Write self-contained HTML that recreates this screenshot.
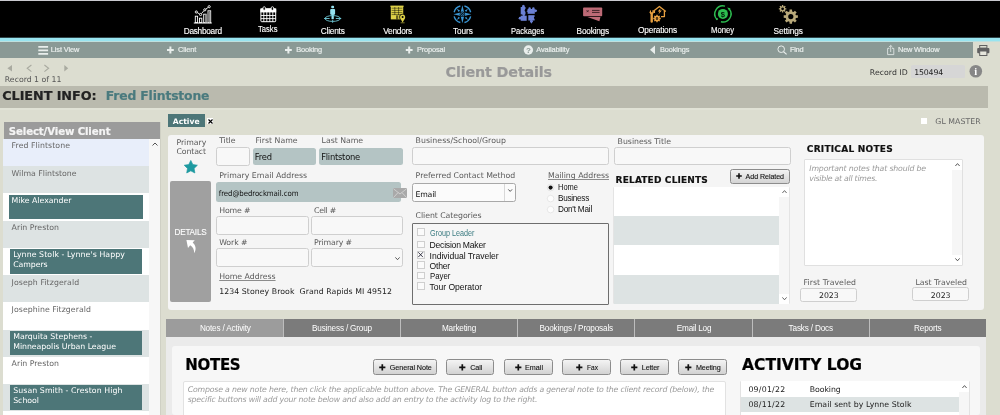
<!DOCTYPE html>
<html lang="en"><head><meta charset="utf-8"><title>Client Details</title>
<style>
html,body{margin:0;padding:0}
body{will-change:transform;width:1000px;height:415px;overflow:hidden;position:relative;background:#dcddd0;font-family:"DejaVu Sans","Liberation Sans",sans-serif}
.b{position:absolute;box-sizing:border-box}
.t{position:absolute;white-space:pre;line-height:1;margin:0;padding:0}
svg{position:absolute;overflow:visible}
</style></head>
<body>
<div class="b" style="left:0px;top:0px;width:1000px;height:38px;background:#000;"></div>
<div class="b" style="left:0px;top:0px;width:1000px;height:1px;background:#c9c9cf;"></div>
<div class="b" style="left:0px;top:37px;width:1000px;height:1px;background:#2e4448;"></div>
<div class="b" style="left:0px;top:38px;width:1000px;height:3px;background:#98e4f0;"></div>
<div class="b" style="left:0px;top:41px;width:1000px;height:1px;background:#bfe0de;"></div>
<span class="t" style="left:183.70px;top:27.00px;font-family:'Liberation Sans',sans-serif;font-size:8.3px;color:#fff;-webkit-text-stroke:0.12px #fff;letter-spacing:-0.277px;">Dashboard</span>
<span class="t" style="left:258.20px;top:25.10px;font-family:'Liberation Sans',sans-serif;font-size:8.3px;color:#fff;-webkit-text-stroke:0.12px #fff;transform:scaleX(0.9190);transform-origin:0 0;">Tasks</span>
<span class="t" style="left:320.80px;top:27.00px;font-family:'Liberation Sans',sans-serif;font-size:8.3px;color:#fff;-webkit-text-stroke:0.12px #fff;letter-spacing:-0.225px;">Clients</span>
<span class="t" style="left:383.20px;top:27.00px;font-family:'Liberation Sans',sans-serif;font-size:8.3px;color:#fff;-webkit-text-stroke:0.12px #fff;letter-spacing:-0.236px;">Vendors</span>
<span class="t" style="left:453.10px;top:27.00px;font-family:'Liberation Sans',sans-serif;font-size:8.3px;color:#fff;-webkit-text-stroke:0.12px #fff;letter-spacing:-0.139px;">Tours</span>
<span class="t" style="left:510.90px;top:27.00px;font-family:'Liberation Sans',sans-serif;font-size:8.3px;color:#fff;-webkit-text-stroke:0.12px #fff;transform:scaleX(0.9139);transform-origin:0 0;">Packages</span>
<span class="t" style="left:576.60px;top:27.00px;font-family:'Liberation Sans',sans-serif;font-size:8.3px;color:#fff;-webkit-text-stroke:0.12px #fff;letter-spacing:-0.243px;">Bookings</span>
<span class="t" style="left:638.00px;top:25.50px;font-family:'Liberation Sans',sans-serif;font-size:8.3px;color:#fff;-webkit-text-stroke:0.12px #fff;letter-spacing:-0.159px;">Operations</span>
<span class="t" style="left:710.80px;top:25.50px;font-family:'Liberation Sans',sans-serif;font-size:8.3px;color:#fff;-webkit-text-stroke:0.12px #fff;transform:scaleX(0.9315);transform-origin:0 0;">Money</span>
<span class="t" style="left:773.50px;top:27.00px;font-family:'Liberation Sans',sans-serif;font-size:8.3px;color:#fff;-webkit-text-stroke:0.12px #fff;letter-spacing:-0.073px;">Settings</span>
<svg style="left:0;top:0" width="1000" height="42" viewBox="0 0 1000 42"><g fill="none" stroke="#fff" stroke-width="0.9"><path d="M193.8 23 H211.8" stroke-width="1"/><rect x="195.3" y="16.2" width="2.3" height="6.4"/><rect x="199.5" y="18.2" width="2.3" height="4.4"/><rect x="203.7" y="14.2" width="2.4" height="8.4"/><rect x="208" y="10.8" width="2.7" height="11.8"/><path d="M197.2 12.6 L199.6 14 M201.5 13.6 L204 10.6 M205.7 9.2 L208.2 7.4"/><circle cx="196.3" cy="12" r="1.1"/><circle cx="200.6" cy="14.5" r="1.1"/><circle cx="204.8" cy="9.8" r="1.1"/><circle cx="209.2" cy="6.7" r="1.1"/></g><path d="M204.9 14.6 h1 v7.8 h-1z M208.6 11.3 h1.6 v11.2 h-1.6z" fill="#8a8a8a"/><g><rect x="260.9" y="8.9" width="14.8" height="12.8" rx="0.8" fill="none" stroke="#fff" stroke-width="1"/><rect x="260.4" y="8.4" width="15.8" height="4" fill="#fff"/><path d="M260.9 15.5 H275.7 M260.9 18.6 H275.7 M263.8 12 V21.7 M266.8 12 V21.7 M269.8 12 V21.7 M272.8 12 V21.7" stroke="#fff" stroke-width="0.9" fill="none"/><rect x="263" y="6.7" width="2.4" height="3.6" rx="1.2" fill="#000" stroke="#fff" stroke-width="0.8"/><rect x="271.2" y="6.7" width="2.4" height="3.6" rx="1.2" fill="#000" stroke="#fff" stroke-width="0.8"/></g><g><rect x="331.2" y="5.8" width="2.9" height="2.4" rx="0.9" fill="#96e2f0"/><rect x="330.2" y="8.9" width="4.9" height="5.8" rx="1" fill="#96e2f0"/><rect x="331.5" y="13" width="2.3" height="6.2" rx="0.4" fill="#96e2f0"/><ellipse cx="332.65" cy="18.5" rx="7.6" ry="2.9" fill="none" stroke="#6fc9d8" stroke-width="0.9"/><path d="M324.2 18.5 H329.6 M335.8 18.5 H341.2 M332.65 20 V22.8" stroke="#6fc9d8" stroke-width="0.9"/><path d="M325.6 17.5 L324 18.5 L325.6 19.5 Z M339.7 17.5 L341.3 18.5 L339.7 19.5 Z" fill="#6fc9d8"/></g><g><rect x="390.8" y="6" width="12.4" height="13.4" fill="#ddd048"/><rect x="390.4" y="5.6" width="13.2" height="1.2" fill="#ddd048"/><path d="M391.6 8.2 H402.4 M391.6 10.4 H402.4 M391.6 12.6 H402.4 M391.6 14.6 H400 M394.8 7 V15 M398.6 7 V15" stroke="#000" stroke-width="0.8" opacity="0.6" fill="none"/><rect x="396" y="15.4" width="2.2" height="4" fill="#000" opacity="0.55"/><circle cx="402.6" cy="17" r="3.3" fill="#000"/><path d="M402.6 22.6 L400.3 18.4 A2.6 2.6 0 1 1 404.9 18.4 Z" fill="#ddd048"/><circle cx="402.6" cy="17" r="1" fill="#000"/><path d="M400.6 22.8 H404.6" stroke="#ddd048" stroke-width="0.6"/></g><g><path d="M470.65 16.36 A8.5 8.5 0 0 1 464.46 22.55 M460.34 22.55 A8.5 8.5 0 0 1 454.15 16.36 M454.15 12.24 A8.5 8.5 0 0 1 460.34 6.05 M464.46 6.05 A8.5 8.5 0 0 1 470.65 12.24 " fill="none" stroke="#3a96d4" stroke-width="1.4"/><path d="M462.4 5.300000000000001 L464.2 12.5 L471.4 14.3 L464.2 16.1 L462.4 23.3 L460.59999999999997 16.1 L453.4 14.3 L460.59999999999997 12.5 Z" fill="#3a96d4"/><path d="M456.79999999999995 8.700000000000001 L460.0 10.5 L458.59999999999997 11.9 Z M468.0 8.700000000000001 L464.79999999999995 10.5 L466.2 11.9 Z M456.79999999999995 19.9 L460.0 18.1 L458.59999999999997 16.7 Z M468.0 19.9 L464.79999999999995 18.1 L466.2 16.7 Z" fill="#3a96d4"/><circle cx="462.4" cy="14.3" r="2.7" fill="#000"/><circle cx="462.4" cy="14.3" r="1.7" fill="none" stroke="#3a96d4" stroke-width="0.8"/><circle cx="462.4" cy="14.3" r="0.5" fill="#3a96d4"/></g><g fill="#6b80d4"><rect x="520.7" y="7" width="4.8" height="7.4"/><circle cx="523.4" cy="6.3" r="1.3"/><path d="M522.2 5.4 L523.4 4.8 L524.6 5.4 Z"/><circle cx="523.6" cy="14.6" r="1.2"/><rect x="527.6" y="9" width="7.2" height="4.8"/><circle cx="529.6" cy="8.4" r="1.2"/><circle cx="533.4" cy="8.4" r="1.2"/><circle cx="535.4" cy="10.8" r="1.4"/><path d="M535.6 9.6 L537.2 10.8 L535.6 12 Z"/><circle cx="527.2" cy="10.8" r="1.1"/><rect x="520.7" y="15.7" width="6" height="5.1"/><circle cx="520.2" cy="18.2" r="1.4"/><path d="M520 17 L518.4 18.2 L520 19.4 Z"/><rect x="528.3" y="15.2" width="6.3" height="5.3"/><circle cx="531.4" cy="21.2" r="1.4"/><path d="M530.2 21.6 L531.4 23.8 L532.6 21.6 Z"/></g><g fill="#000"><circle cx="526" cy="10.4" r="1.3"/><circle cx="523.8" cy="15.7" r="0.1"/><circle cx="524" cy="15.9" r="1.1" opacity="0"/><circle cx="535" cy="17.8" r="1.1"/></g><circle cx="523.7" cy="15" r="1.1" fill="#6b80d4"/><g><rect x="583.1" y="7.5" width="19.1" height="8.7" rx="0.8" fill="#bd6a76"/><path d="M586.6 10.2 l2 2 m0 -2 l-2 2" stroke="#000" stroke-width="0.8" opacity="0.75"/><path d="M592 10.4 H599.6 M592 12.4 H599.6" stroke="#000" stroke-width="0.9" opacity="0.75"/><path d="M587.4 17.1 H600.4 L599.4 21.3 Z" fill="#bd6a76"/></g><g fill="none" stroke="#e8a040" stroke-width="1.3" stroke-linejoin="round"><path d="M653 11.6 L659.4 6.4 L665.8 11.6"/><path d="M654.4 11 V13 M664.4 11 V16.6 H661"/></g><path d="M660.6 8.2 L657.8 11.6 H659.6 L658.4 14.4 L661.8 10.4 H660 Z" fill="#e8a040"/><path d="M651.7 13 V21.6" stroke="#e8a040" stroke-width="2.4" stroke-linecap="round" fill="none"/><circle cx="651.7" cy="12.2" r="2.1" fill="#e8a040"/><rect x="651" y="9.6" width="1.4" height="2.6" fill="#000"/><path d="M660.74 17.85 L660.74 19.15 L659.81 19.22 L659.50 19.98 L660.11 20.69 L659.19 21.61 L658.48 21.00 L657.72 21.31 L657.65 22.24 L656.35 22.24 L656.28 21.31 L655.52 21.00 L654.81 21.61 L653.89 20.69 L654.50 19.98 L654.19 19.22 L653.26 19.15 L653.26 17.85 L654.19 17.78 L654.50 17.02 L653.89 16.31 L654.81 15.39 L655.52 16.00 L656.28 15.69 L656.35 14.76 L657.65 14.76 L657.72 15.69 L658.48 16.00 L659.19 15.39 L660.11 16.31 L659.50 17.02 L659.81 17.78 Z M658.20 18.50 A1.2 1.2 0 1 0 655.80 18.50 A1.2 1.2 0 1 0 658.20 18.50 Z" fill="#e8a040" fill-rule="evenodd"/><circle cx="657" cy="18.5" r="0.5" fill="#e8a040"/><g><circle cx="722.9" cy="13.9" r="5" fill="#2dbd50"/><path d="M716.70 19.11 A8.1 8.1 0 0 1 725.00 6.08" fill="none" stroke="#2dbd50" stroke-width="1.4"/><path d="M729.28 8.91 A8.1 8.1 0 0 1 720.94 21.76" fill="none" stroke="#2dbd50" stroke-width="1.4"/><circle cx="716.9" cy="19.1" r="1.1" fill="#2dbd50"/><path d="M727.2 7.6 L730.4 8.2 L729.4 11 Z" fill="#2dbd50"/><text x="722.9" y="16.6" font-family="Liberation Sans,sans-serif" font-weight="bold" font-size="7.6" text-anchor="middle" fill="#031a09">$</text></g><path d="M786.34 8.15 L786.34 9.45 L785.22 9.47 L784.92 10.17 L785.71 10.99 L784.79 11.91 L783.97 11.12 L783.27 11.42 L783.25 12.54 L781.95 12.54 L781.93 11.42 L781.23 11.12 L780.41 11.91 L779.49 10.99 L780.28 10.17 L779.98 9.47 L778.86 9.45 L778.86 8.15 L779.98 8.13 L780.28 7.43 L779.49 6.61 L780.41 5.69 L781.23 6.48 L781.93 6.18 L781.95 5.06 L783.25 5.06 L783.27 6.18 L783.97 6.48 L784.79 5.69 L785.71 6.61 L784.92 7.43 L785.22 8.13 Z M784.00 8.80 A1.4 1.4 0 1 0 781.20 8.80 A1.4 1.4 0 1 0 784.00 8.80 Z" fill="#b9a97a" fill-rule="evenodd"/><path d="M797.89 15.36 L797.89 17.84 L795.93 17.92 L795.36 19.30 L796.69 20.74 L794.94 22.49 L793.50 21.16 L792.12 21.73 L792.04 23.69 L789.56 23.69 L789.48 21.73 L788.10 21.16 L786.66 22.49 L784.91 20.74 L786.24 19.30 L785.67 17.92 L783.71 17.84 L783.71 15.36 L785.67 15.28 L786.24 13.90 L784.91 12.46 L786.66 10.71 L788.10 12.04 L789.48 11.47 L789.56 9.51 L792.04 9.51 L792.12 11.47 L793.50 12.04 L794.94 10.71 L796.69 12.46 L795.36 13.90 L795.93 15.28 Z M793.40 16.60 A2.6 2.6 0 1 0 788.20 16.60 A2.6 2.6 0 1 0 793.40 16.60 Z" fill="#b9a97a" fill-rule="evenodd"/></svg>
<div class="b" style="left:0px;top:42px;width:972.5px;height:16px;background:#8a9995;"></div>
<span class="t" style="left:50.80px;top:46.30px;font-family:'Liberation Sans',sans-serif;font-size:7.4px;color:#e9eeec;-webkit-text-stroke:0.2px #e9eeec;letter-spacing:-0.106px;">List View</span>
<span class="t" style="left:178.00px;top:46.30px;font-family:'Liberation Sans',sans-serif;font-size:7.4px;color:#e9eeec;-webkit-text-stroke:0.2px #e9eeec;letter-spacing:-0.101px;">Client</span>
<span class="t" style="left:296.30px;top:46.30px;font-family:'Liberation Sans',sans-serif;font-size:7.4px;color:#e9eeec;-webkit-text-stroke:0.2px #e9eeec;letter-spacing:-0.146px;">Booking</span>
<span class="t" style="left:417.00px;top:46.30px;font-family:'Liberation Sans',sans-serif;font-size:7.4px;color:#e9eeec;-webkit-text-stroke:0.2px #e9eeec;letter-spacing:-0.146px;">Proposal</span>
<span class="t" style="left:536.30px;top:46.30px;font-family:'Liberation Sans',sans-serif;font-size:7.4px;color:#e9eeec;-webkit-text-stroke:0.2px #e9eeec;letter-spacing:-0.148px;">Availability</span>
<span class="t" style="left:660.00px;top:46.30px;font-family:'Liberation Sans',sans-serif;font-size:7.4px;color:#e9eeec;-webkit-text-stroke:0.2px #e9eeec;letter-spacing:-0.138px;">Bookings</span>
<span class="t" style="left:790.00px;top:46.30px;font-family:'Liberation Sans',sans-serif;font-size:7.4px;color:#e9eeec;-webkit-text-stroke:0.2px #e9eeec;letter-spacing:-0.273px;">Find</span>
<span class="t" style="left:898.00px;top:46.30px;font-family:'Liberation Sans',sans-serif;font-size:7.4px;color:#e9eeec;-webkit-text-stroke:0.2px #e9eeec;letter-spacing:-0.183px;">New Window</span>
<svg style="left:0;top:42px" width="1000" height="16" viewBox="0 42 1000 16"><path d="M38.3 46.8 H48.1 M38.3 50.3 H48.1 M38.3 53.8 H48.1" stroke="#e9eeec" stroke-width="1.8"/><path d="M170.4 46.6 V53.4 M167 50 H173.8" stroke="#e9eeec" stroke-width="2"/><path d="M288.4 46.6 V53.4 M285 50 H291.8" stroke="#e9eeec" stroke-width="2"/><path d="M409.2 46.6 V53.4 M405.8 50 H412.6" stroke="#e9eeec" stroke-width="2"/><circle cx="528.4" cy="50" r="4.7" fill="#e9eeec"/><text x="528.4" y="52.9" font-family="Liberation Sans,sans-serif" font-weight="bold" font-size="8" text-anchor="middle" fill="#8a9995">?</text><path d="M655 45.5 V54.2 L650 49.8 Z" fill="#e9eeec"/><circle cx="781.2" cy="49.2" r="3.3" fill="none" stroke="#e9eeec" stroke-width="1"/><path d="M783.6 51.8 L786.6 54.4" stroke="#e9eeec" stroke-width="1.2"/><path d="M889.4 48.4 H887.6 V54.6 H893.8 V48.4 H892" fill="none" stroke="#e9eeec" stroke-width="0.8"/><path d="M890.7 52 V45.6 M888.9 47.2 L890.7 45.4 L892.5 47.2" fill="none" stroke="#e9eeec" stroke-width="0.8"/></svg><svg style="left:977px;top:44.5px" width="12.6" height="11" viewBox="0 0 12.6 11"><rect x="2.7" y="0.5" width="7.2" height="2.6" fill="none" stroke="#606060" stroke-width="1"/><rect x="0.2" y="3" width="12.2" height="5.2" rx="0.9" fill="#606060"/><rect x="2.7" y="6" width="7.2" height="4.5" fill="#e6e6dc" stroke="#606060" stroke-width="1"/></svg>
<span class="t" style="left:4.80px;top:76.00px;font-family:'DejaVu Sans','Liberation Sans',sans-serif;font-size:7.8px;color:#555;letter-spacing:-0.013px;">Record 1 of 11</span>
<span class="t" style="left:445.60px;top:65.40px;font-family:'DejaVu Sans','Liberation Sans',sans-serif;font-size:14.3px;color:#999;font-weight:bold;-webkit-text-stroke:0.2px #999;letter-spacing:-0.139px;">Client Details</span>
<span class="t" style="left:869.80px;top:69.20px;font-family:'DejaVu Sans','Liberation Sans',sans-serif;font-size:7.8px;color:#333;letter-spacing:0.018px;">Record ID</span>
<div class="b" style="left:911.2px;top:65.2px;width:54.3px;height:13.3px;background:#d6d6d6;border-radius:1.5px;"></div>
<span class="t" style="left:914.20px;top:69.20px;font-family:'DejaVu Sans','Liberation Sans',sans-serif;font-size:7.8px;color:#222;letter-spacing:-0.161px;">150494</span>
<svg style="left:0;top:60px" width="1000" height="22" viewBox="0 60 1000 22"><path d="M12 65 V71.6 L7.4 68.3 Z" fill="#a9aaa0"/><path d="M31.4 65 L27.2 68.3 L31.4 71.6" fill="none" stroke="#a9aaa0" stroke-width="1.1"/><path d="M44.4 65 L48.6 68.3 L44.4 71.6" fill="none" stroke="#a9aaa0" stroke-width="1.1"/><path d="M64.3 65 V71.6 L68.2 68.3 Z" fill="#a9aaa0"/><circle cx="975.8" cy="71.2" r="6.3" fill="#878787"/><text x="975.8" y="75" font-family="Liberation Serif,serif" font-weight="bold" font-size="10.5" text-anchor="middle" fill="#fff">i</text></svg>
<div class="b" style="left:0px;top:86px;width:987.7px;height:22px;background:#babaae;"></div>
<div class="b" style="left:0px;top:108px;width:987.7px;height:1.6px;background:#e1e2d6;"></div>
<h1 class="t" style="left:2.30px;top:90.30px;font-family:'DejaVu Sans','Liberation Sans',sans-serif;font-size:12.8px;color:#222;font-weight:bold;-webkit-text-stroke:0.2px #222;letter-spacing:-0.080px;">CLIENT INFO:</h1>
<h1 class="t" style="left:105.80px;top:89.80px;font-family:'DejaVu Sans','Liberation Sans',sans-serif;font-size:12.4px;color:#4a7a7e;font-weight:bold;-webkit-text-stroke:0.2px #4a7a7e;letter-spacing:-0.174px;">Fred Flintstone</h1>
<div class="b" style="left:4px;top:122px;width:156px;height:17px;background:#9b9b9b;"></div>
<h2 class="t" style="left:8.80px;top:127.00px;font-family:'DejaVu Sans','Liberation Sans',sans-serif;font-size:10.2px;color:#f4f4f4;font-weight:bold;-webkit-text-stroke:0.2px #f4f4f4;letter-spacing:-0.125px;">Select/View Client</h2>
<div class="b" style="left:3px;top:139px;width:146px;height:276px;background:#fff;"></div>
<div class="b" style="left:149px;top:139px;width:11.2px;height:276px;background:#f7f7f7;"></div>
<div class="b" style="left:160.2px;top:122px;width:1.2px;height:293px;background:#cfd0c4;"></div>
<div class="b" style="left:3px;top:139px;width:146px;height:27.23px;background:#e8eefa;"></div>
<span class="t" style="left:11.60px;top:142.40px;font-family:'DejaVu Sans','Liberation Sans',sans-serif;font-size:7.8px;color:#666;letter-spacing:0.052px;">Fred Flintstone</span>
<div class="b" style="left:3px;top:166.23px;width:146px;height:27.23px;background:#dde3e3;"></div>
<span class="t" style="left:11.60px;top:169.63px;font-family:'DejaVu Sans','Liberation Sans',sans-serif;font-size:7.8px;color:#666;letter-spacing:-0.011px;">Wilma Flintstone</span>
<div class="b" style="left:9.2px;top:194.96px;width:133.6px;height:23.6px;background:#4d7678;"></div>
<span class="t" style="left:11.60px;top:196.76px;font-family:'DejaVu Sans','Liberation Sans',sans-serif;font-size:7.8px;color:#fff;letter-spacing:-0.004px;">Mike Alexander</span>
<div class="b" style="left:3px;top:220.69px;width:146px;height:27.23px;background:#dde3e3;"></div>
<span class="t" style="left:11.60px;top:224.09px;font-family:'DejaVu Sans','Liberation Sans',sans-serif;font-size:7.8px;color:#666;letter-spacing:0.003px;">Arin Preston</span>
<div class="b" style="left:10.2px;top:249.12px;width:131.4px;height:24.7px;background:#4d7678;"></div>
<span class="t" style="left:13.20px;top:251.22px;font-family:'DejaVu Sans','Liberation Sans',sans-serif;font-size:7.8px;color:#fff;letter-spacing:0.089px;">Lynne Stolk - Lynne&#x27;s Happy</span>
<span class="t" style="left:13.20px;top:261.22px;font-family:'DejaVu Sans','Liberation Sans',sans-serif;font-size:7.8px;color:#fff;letter-spacing:-0.063px;">Campers</span>
<div class="b" style="left:3px;top:275.15px;width:146px;height:27.23px;background:#dde3e3;"></div>
<span class="t" style="left:11.60px;top:278.55px;font-family:'DejaVu Sans','Liberation Sans',sans-serif;font-size:7.8px;color:#666;letter-spacing:0.071px;">Joseph Fitzgerald</span>
<span class="t" style="left:11.60px;top:305.78px;font-family:'DejaVu Sans','Liberation Sans',sans-serif;font-size:7.8px;color:#666;letter-spacing:0.056px;">Josephine Fitzgerald</span>
<div class="b" style="left:3px;top:329.61px;width:146px;height:27.23px;background:#dde3e3;"></div>
<div class="b" style="left:10.2px;top:330.81px;width:131.4px;height:24.7px;background:#4d7678;"></div>
<span class="t" style="left:13.20px;top:332.91px;font-family:'DejaVu Sans','Liberation Sans',sans-serif;font-size:7.8px;color:#fff;letter-spacing:0.025px;">Marquita Stephens -</span>
<span class="t" style="left:13.20px;top:342.91px;font-family:'DejaVu Sans','Liberation Sans',sans-serif;font-size:7.8px;color:#fff;letter-spacing:-0.029px;">Minneapolis Urban League</span>
<span class="t" style="left:11.60px;top:360.24px;font-family:'DejaVu Sans','Liberation Sans',sans-serif;font-size:7.8px;color:#666;letter-spacing:0.003px;">Arin Preston</span>
<div class="b" style="left:3px;top:384.07px;width:146px;height:27.23px;background:#dde3e3;"></div>
<div class="b" style="left:10.2px;top:385.27px;width:131.4px;height:24.7px;background:#4d7678;"></div>
<span class="t" style="left:13.20px;top:387.37px;font-family:'DejaVu Sans','Liberation Sans',sans-serif;font-size:7.8px;color:#fff;letter-spacing:0.087px;">Susan Smith - Creston High</span>
<span class="t" style="left:13.20px;top:397.37px;font-family:'DejaVu Sans','Liberation Sans',sans-serif;font-size:7.8px;color:#fff;letter-spacing:-0.015px;">School</span>
<svg style="left:151.5px;top:142px" width="6" height="4" viewBox="0 0 6 4"><path d="M0.5 3.5 L3 1 L5.5 3.5" fill="none" stroke="#555" stroke-width="1"/></svg>
<div class="b" style="left:167.6px;top:114px;width:37.2px;height:13.4px;background:#4d7678;"></div>
<span class="t" style="left:172.80px;top:117.60px;font-family:'DejaVu Sans','Liberation Sans',sans-serif;font-size:7.6px;color:#fff;font-weight:bold;letter-spacing:0.014px;">Active</span>
<div class="b" style="left:207.2px;top:118px;width:5.6px;height:6px;background:#fff;"></div>
<svg style="left:207.7px;top:118.5px" width="5" height="5" viewBox="0 0 5 5"><path d="M0.5 0.5 L4.5 4.5 M4.5 0.5 L0.5 4.5" stroke="#000" stroke-width="1.1" fill="none"/></svg>
<div class="b" style="left:920.6px;top:117.6px;width:6.9px;height:6.7px;background:#fff;"></div>
<span class="t" style="left:935.30px;top:117.90px;font-family:'DejaVu Sans','Liberation Sans',sans-serif;font-size:7.8px;color:#666;letter-spacing:0.046px;">GL MASTER</span>
<div class="b" style="left:167.5px;top:134.5px;width:816.7px;height:175.5px;background:#f5f5f5;border-radius:3px;"></div>
<span class="t" style="left:176.40px;top:138.60px;font-family:'DejaVu Sans','Liberation Sans',sans-serif;font-size:7.8px;color:#5a5a5a;letter-spacing:-0.020px;">Primary</span>
<span class="t" style="left:176.40px;top:148.00px;font-family:'DejaVu Sans','Liberation Sans',sans-serif;font-size:7.8px;color:#5a5a5a;letter-spacing:-0.106px;">Contact</span>
<svg style="left:183.6px;top:160px" width="13.6" height="13.4" viewBox="0 0 24 23"><path d="M12 0.5 L15.6 7.8 L23.6 8.9 L17.8 14.6 L19.2 22.6 L12 18.8 L4.8 22.6 L6.2 14.6 L0.4 8.9 L8.4 7.8 Z" fill="#1d9aa0" stroke="#1d9aa0" stroke-width="1.2" stroke-linejoin="round"/></svg>
<div class="b" style="left:170.4px;top:181px;width:40.6px;height:120.5px;background:#a0a0a0;border-radius:2px;"></div>
<span class="t" style="left:174.50px;top:228.90px;font-family:'Liberation Sans',sans-serif;font-size:8.2px;color:#fff;-webkit-text-stroke:0.1px #fff;letter-spacing:-0.219px;">DETAILS</span>
<svg style="left:185.6px;top:241px" width="10.4" height="12" viewBox="0 0 10.4 12"><path d="M0.4 -1 L8.8 -0.7 L6.7 1.6 C9.9 4.5 10.6 8.5 8.2 12.3 C8.3 8.6 7 6.2 4.2 4.3 L2 6.9 Z" fill="#fff"/></svg>
<span class="t" style="left:219.20px;top:137.00px;font-family:'DejaVu Sans','Liberation Sans',sans-serif;font-size:7.8px;color:#5a5a5a;letter-spacing:-0.104px;">Title</span>
<div class="b" style="left:216.4px;top:147.4px;width:34px;height:18.6px;background:#f8f8f8;border:1px solid #cfcfcf;box-sizing:border-box;border-radius:2.5px;"></div>
<span class="t" style="left:255.60px;top:137.00px;font-family:'DejaVu Sans','Liberation Sans',sans-serif;font-size:7.8px;color:#5a5a5a;letter-spacing:0.011px;">First Name</span>
<div class="b" style="left:253px;top:148px;width:63px;height:17.4px;background:#b4c4c4;border-radius:2.5px;"></div>
<span class="t" style="left:254.80px;top:152.40px;font-family:'DejaVu Sans Condensed','DejaVu Sans','Liberation Sans',sans-serif;font-size:9.3px;color:#111;letter-spacing:-0.157px;">Fred</span>
<span class="t" style="left:321.60px;top:137.00px;font-family:'DejaVu Sans','Liberation Sans',sans-serif;font-size:7.8px;color:#5a5a5a;letter-spacing:-0.037px;">Last Name</span>
<div class="b" style="left:319.2px;top:148px;width:84px;height:17.4px;background:#b4c4c4;border-radius:2.5px;"></div>
<span class="t" style="left:321.20px;top:152.40px;font-family:'DejaVu Sans Condensed','DejaVu Sans','Liberation Sans',sans-serif;font-size:9.3px;color:#111;letter-spacing:-0.245px;">Flintstone</span>
<span class="t" style="left:219.20px;top:172.40px;font-family:'DejaVu Sans','Liberation Sans',sans-serif;font-size:7.8px;color:#5a5a5a;letter-spacing:0.010px;">Primary Email Address</span>
<div class="b" style="left:216.4px;top:182.4px;width:184.6px;height:19.2px;background:#b4c4c4;border-radius:2.5px;"></div>
<span class="t" style="left:218.80px;top:190.00px;font-family:'DejaVu Sans Condensed','DejaVu Sans','Liberation Sans',sans-serif;font-size:7.8px;color:#111;letter-spacing:-0.088px;">fred@bedrockmail.com</span>
<svg style="left:393px;top:188px" width="14" height="10" viewBox="0 0 14 10"><rect x="0" y="0" width="14" height="10" rx="1" fill="#a9a9a9"/><path d="M0.5 0.8 L7 6 L13.5 0.8 M0.5 9.5 L5 4.6 M13.5 9.5 L9 4.6" stroke="#d8d8d8" stroke-width="0.8" fill="none"/></svg>
<span class="t" style="left:219.20px;top:207.00px;font-family:'DejaVu Sans','Liberation Sans',sans-serif;font-size:7.8px;color:#5a5a5a;letter-spacing:-0.141px;">Home #</span>
<div class="b" style="left:216.4px;top:216.4px;width:92.4px;height:18.6px;background:#f8f8f8;border:1px solid #cfcfcf;box-sizing:border-box;border-radius:2.5px;"></div>
<span class="t" style="left:314.00px;top:207.00px;font-family:'DejaVu Sans','Liberation Sans',sans-serif;font-size:7.8px;color:#5a5a5a;letter-spacing:-0.266px;">Cell #</span>
<div class="b" style="left:311px;top:216.4px;width:92.2px;height:18.6px;background:#f8f8f8;border:1px solid #cfcfcf;box-sizing:border-box;border-radius:2.5px;"></div>
<span class="t" style="left:219.20px;top:239.40px;font-family:'DejaVu Sans','Liberation Sans',sans-serif;font-size:7.8px;color:#5a5a5a;letter-spacing:-0.078px;">Work #</span>
<div class="b" style="left:216.4px;top:248.4px;width:92.4px;height:19px;background:#f8f8f8;border:1px solid #cfcfcf;box-sizing:border-box;border-radius:2.5px;"></div>
<span class="t" style="left:314.00px;top:239.40px;font-family:'DejaVu Sans','Liberation Sans',sans-serif;font-size:7.8px;color:#5a5a5a;letter-spacing:-0.127px;">Primary #</span>
<div class="b" style="left:311px;top:248.4px;width:92.2px;height:19px;background:#f8f8f8;border:1px solid #cfcfcf;box-sizing:border-box;border-radius:2.5px;"></div>
<svg style="left:394.5px;top:257px" width="5" height="3.4" viewBox="0 0 5 3.4"><path d="M0.4 0.4 L2.5 2.7 L4.6 0.4" fill="none" stroke="#444" stroke-width="0.9"/></svg>
<span class="t" style="left:219.20px;top:273.00px;font-family:'DejaVu Sans','Liberation Sans',sans-serif;font-size:7.8px;color:#5a5a5a;text-decoration:underline;text-decoration-color:#8c8c8c;text-decoration-thickness:0.7px;text-underline-offset:1px;letter-spacing:-0.014px;">Home Address</span>
<span class="t" style="left:219.20px;top:288.00px;font-family:'DejaVu Sans','Liberation Sans',sans-serif;font-size:7.8px;color:#222;letter-spacing:0.054px;">1234 Stoney Brook  Grand Rapids MI 49512</span>
<span class="t" style="left:415.60px;top:137.00px;font-family:'DejaVu Sans','Liberation Sans',sans-serif;font-size:7.8px;color:#5a5a5a;letter-spacing:0.054px;">Business/School/Group</span>
<div class="b" style="left:412.4px;top:146.6px;width:196.8px;height:18.8px;background:#f8f8f8;border:1px solid #cfcfcf;box-sizing:border-box;border-radius:2.5px;"></div>
<span class="t" style="left:415.60px;top:172.40px;font-family:'DejaVu Sans','Liberation Sans',sans-serif;font-size:7.8px;color:#5a5a5a;letter-spacing:-0.030px;">Preferred Contact Method</span>
<div class="b" style="left:412.4px;top:183.4px;width:103.2px;height:19px;background:#fbfbfb;border:1px solid #a8a8a8;box-sizing:border-box;border-radius:2.5px;"></div>
<div class="b" style="left:504px;top:184.4px;width:1px;height:17px;background:#d8d8d8;"></div>
<svg style="left:507.6px;top:188.8px" width="4.4" height="3" viewBox="0 0 4.4 3"><path d="M0.3 0.4 L2.2 2.4 L4.1 0.4" fill="none" stroke="#444" stroke-width="0.9"/></svg>
<span class="t" style="left:415.60px;top:190.60px;font-family:'DejaVu Sans','Liberation Sans',sans-serif;font-size:7.8px;color:#111;letter-spacing:-0.248px;">Email</span>
<span class="t" style="left:415.60px;top:212.00px;font-family:'DejaVu Sans','Liberation Sans',sans-serif;font-size:7.8px;color:#5a5a5a;letter-spacing:-0.063px;">Client Categories</span>
<div class="b" style="left:412.4px;top:222.6px;width:196.2px;height:82.6px;background:#f6f6f6;border:1px solid #6e6e6e;box-sizing:border-box;border-radius:1px;"></div>
<div class="b" style="left:417px;top:228.4px;width:7.6px;height:7.6px;background:#fbfbfb;border:1px solid #cfcfcf;box-sizing:border-box;"></div>
<span class="t" style="left:429.60px;top:230.00px;font-family:'Liberation Sans',sans-serif;font-size:8.2px;color:#3b7b80;transform:scaleX(0.8787);transform-origin:0 0;">Group Leader</span>
<div class="b" style="left:417px;top:240.8px;width:7.6px;height:7.6px;background:#fbfbfb;border:1px solid #cfcfcf;box-sizing:border-box;"></div>
<span class="t" style="left:429.60px;top:241.40px;font-family:'Liberation Sans',sans-serif;font-size:8.6px;color:#111;letter-spacing:-0.231px;">Decision Maker</span>
<div class="b" style="left:417px;top:251.1px;width:7.6px;height:7.6px;background:#fbfbfb;border:1px solid #cfcfcf;box-sizing:border-box;"></div>
<span class="t" style="left:429.60px;top:251.70px;font-family:'Liberation Sans',sans-serif;font-size:8.6px;color:#111;letter-spacing:-0.039px;">Individual Traveler</span>
<div class="b" style="left:417px;top:261.4px;width:7.6px;height:7.6px;background:#fbfbfb;border:1px solid #cfcfcf;box-sizing:border-box;"></div>
<span class="t" style="left:429.60px;top:262.00px;font-family:'Liberation Sans',sans-serif;font-size:8.6px;color:#111;letter-spacing:-0.220px;">Other</span>
<div class="b" style="left:417px;top:271.7px;width:7.6px;height:7.6px;background:#fbfbfb;border:1px solid #cfcfcf;box-sizing:border-box;"></div>
<span class="t" style="left:429.60px;top:272.30px;font-family:'Liberation Sans',sans-serif;font-size:8.6px;color:#111;transform:scaleX(0.9086);transform-origin:0 0;">Payer</span>
<div class="b" style="left:417px;top:282px;width:7.6px;height:7.6px;background:#fbfbfb;border:1px solid #cfcfcf;box-sizing:border-box;"></div>
<span class="t" style="left:429.60px;top:282.60px;font-family:'Liberation Sans',sans-serif;font-size:8.6px;color:#111;letter-spacing:-0.049px;">Tour Operator</span>
<svg style="left:418.2px;top:252.2px" width="5.2" height="5.4" viewBox="0 0 5.2 5.4"><path d="M0.3 0.3 L4.9 5.1 M4.9 0.3 L0.3 5.1" stroke="#223" stroke-width="0.9" fill="none"/></svg>
<span class="t" style="left:548.00px;top:172.40px;font-family:'DejaVu Sans','Liberation Sans',sans-serif;font-size:7.8px;color:#5a5a5a;text-decoration:underline;text-decoration-color:#8c8c8c;text-decoration-thickness:0.7px;text-underline-offset:1px;letter-spacing:-0.029px;">Mailing Address</span>
<svg style="left:547.4px;top:183.6px" width="7.2" height="7.2" viewBox="0 0 7.2 7.2"><circle cx="3.6" cy="3.6" r="3.3" fill="#fff" stroke="#d4d4d4" stroke-width="0.6"/><circle cx="3.6" cy="3.6" r="2.1" fill="#111"/></svg>
<span class="t" style="left:558.00px;top:184.00px;font-family:'Liberation Sans',sans-serif;font-size:8.2px;color:#111;transform:scaleX(0.9156);transform-origin:0 0;">Home</span>
<svg style="left:547.4px;top:194.6px" width="7.2" height="7.2" viewBox="0 0 7.2 7.2"><circle cx="3.6" cy="3.6" r="3.3" fill="#fdfdfd" stroke="#dadada" stroke-width="0.6"/></svg>
<span class="t" style="left:558.00px;top:195.00px;font-family:'Liberation Sans',sans-serif;font-size:8.2px;color:#111;letter-spacing:-0.279px;">Business</span>
<svg style="left:547.4px;top:205.6px" width="7.2" height="7.2" viewBox="0 0 7.2 7.2"><circle cx="3.6" cy="3.6" r="3.3" fill="#fdfdfd" stroke="#dadada" stroke-width="0.6"/></svg>
<span class="t" style="left:558.00px;top:206.00px;font-family:'Liberation Sans',sans-serif;font-size:8.2px;color:#111;letter-spacing:-0.216px;">Don&#x27;t Mail</span>
<span class="t" style="left:617.60px;top:138.00px;font-family:'DejaVu Sans','Liberation Sans',sans-serif;font-size:7.8px;color:#5a5a5a;letter-spacing:-0.013px;">Business Title</span>
<div class="b" style="left:614.4px;top:146.6px;width:177px;height:18.8px;background:#f8f8f8;border:1px solid #cfcfcf;box-sizing:border-box;border-radius:2.5px;"></div>
<h3 class="t" style="left:615.60px;top:175.60px;font-family:'DejaVu Sans','Liberation Sans',sans-serif;font-size:9px;color:#111;font-weight:bold;-webkit-text-stroke:0.2px #111;letter-spacing:0.162px;">RELATED CLIENTS</h3>
<div class="b" style="left:730px;top:169px;width:59.6px;height:14.6px;background:linear-gradient(#f2f2f2,#d4d4d4);border:1px solid #8c8c8c;box-sizing:border-box;border-radius:2.5px;"></div>
<span class="t" style="left:745.60px;top:174.00px;font-family:'Liberation Sans',sans-serif;font-size:7.1px;color:#111;-webkit-text-stroke:0.1px #111;letter-spacing:-0.059px;">Add Related</span>
<svg style="left:736px;top:173.4px" width="6" height="6" viewBox="0 0 6 6"><path d="M3 0.2 V5.8 M0.2 3 H5.8" stroke="#111" stroke-width="1.6"/></svg>
<div class="b" style="left:613.2px;top:186.6px;width:176.8px;height:117.8px;background:#f6f6f6;border:1px solid #e4e4e4;box-sizing:border-box;border-radius:1px;"></div>
<div class="b" style="left:613.6px;top:186.8px;width:165.4px;height:29.2px;background:#fff;"></div>
<div class="b" style="left:613.6px;top:216px;width:165.4px;height:29px;background:#dde3e3;"></div>
<div class="b" style="left:613.6px;top:245px;width:165.4px;height:29.5px;background:#fff;"></div>
<div class="b" style="left:613.6px;top:274.5px;width:165.4px;height:29.5px;background:#dde3e3;"></div>
<div class="b" style="left:779.4px;top:187.2px;width:10px;height:9.8px;background:#fff;"></div>
<div class="b" style="left:779.4px;top:293.6px;width:10px;height:10.2px;background:#fff;"></div>
<svg style="left:782px;top:190.4px" width="5" height="3.4" viewBox="0 0 5 3.4"><path d="M0.4 3 L2.5 0.6 L4.6 3" fill="none" stroke="#555" stroke-width="0.9"/></svg>
<svg style="left:782px;top:297px" width="5" height="3.4" viewBox="0 0 5 3.4"><path d="M0.4 0.4 L2.5 2.8 L4.6 0.4" fill="none" stroke="#555" stroke-width="0.9"/></svg>
<h3 class="t" style="left:806.80px;top:144.80px;font-family:'DejaVu Sans','Liberation Sans',sans-serif;font-size:9px;color:#111;font-weight:bold;-webkit-text-stroke:0.2px #111;letter-spacing:0.238px;">CRITICAL NOTES</h3>
<div class="b" style="left:804.3px;top:159.2px;width:158.3px;height:106.6px;background:#fff;border:1px solid #e0e0e0;box-sizing:border-box;border-radius:1px;"></div>
<div class="b" style="left:951.7px;top:160.2px;width:9.9px;height:104.1px;background:#f6f6f6;"></div>
<div class="b" style="left:951.7px;top:160.2px;width:9.9px;height:9.8px;background:#fff;"></div>
<div class="b" style="left:951.7px;top:254.5px;width:9.9px;height:9.8px;background:#fff;"></div>
<svg style="left:954.5px;top:163.4px" width="5" height="3.4" viewBox="0 0 5 3.4"><path d="M0.4 3 L2.5 0.6 L4.6 3" fill="none" stroke="#444" stroke-width="0.9"/></svg>
<svg style="left:954.5px;top:258px" width="5" height="3.4" viewBox="0 0 5 3.4"><path d="M0.4 0.4 L2.5 2.8 L4.6 0.4" fill="none" stroke="#444" stroke-width="0.9"/></svg>
<span class="t" style="left:809.30px;top:164.50px;font-family:'DejaVu Sans','Liberation Sans',sans-serif;font-size:7.8px;color:#9a9a9a;font-style:italic;letter-spacing:-0.164px;">Important notes that should be</span>
<span class="t" style="left:809.30px;top:174.60px;font-family:'DejaVu Sans','Liberation Sans',sans-serif;font-size:7.8px;color:#9a9a9a;font-style:italic;letter-spacing:-0.265px;">visible at all times.</span>
<span class="t" style="left:803.60px;top:279.00px;font-family:'DejaVu Sans','Liberation Sans',sans-serif;font-size:7.8px;color:#5a5a5a;letter-spacing:0.042px;">First Traveled</span>
<div class="b" style="left:800px;top:287.7px;width:56.8px;height:14.3px;background:#f8f8f8;border:1px solid #cfcfcf;box-sizing:border-box;border-radius:2.5px;"></div>
<span class="t" style="left:819.00px;top:292.20px;font-family:'DejaVu Sans','Liberation Sans',sans-serif;font-size:7.8px;color:#222;letter-spacing:-0.036px;">2023</span>
<span class="t" style="left:915.40px;top:278.60px;font-family:'DejaVu Sans','Liberation Sans',sans-serif;font-size:7.8px;color:#5a5a5a;letter-spacing:-0.004px;">Last Traveled</span>
<div class="b" style="left:911.8px;top:287.3px;width:57.2px;height:14.1px;background:#f8f8f8;border:1px solid #cfcfcf;box-sizing:border-box;border-radius:2.5px;"></div>
<span class="t" style="left:930.70px;top:291.80px;font-family:'DejaVu Sans','Liberation Sans',sans-serif;font-size:7.8px;color:#222;letter-spacing:0.014px;">2023</span>
<div class="b" style="left:166.3px;top:337px;width:819.7px;height:78px;background:#ebebeb;"></div>
<div class="b" style="left:166.3px;top:318.8px;width:819.7px;height:18.2px;background:#7b7b7b;"></div>
<div class="b" style="left:166.3px;top:318.8px;width:116.7px;height:18.2px;background:#9c9c9c;"></div>
<div class="b" style="left:282.5px;top:318.8px;width:1px;height:18.2px;background:#bdbdbd;"></div>
<div class="b" style="left:399.7px;top:318.8px;width:1px;height:18.2px;background:#bdbdbd;"></div>
<div class="b" style="left:516.7px;top:318.8px;width:1px;height:18.2px;background:#bdbdbd;"></div>
<div class="b" style="left:633.9px;top:318.8px;width:1px;height:18.2px;background:#bdbdbd;"></div>
<div class="b" style="left:751.5px;top:318.8px;width:1px;height:18.2px;background:#bdbdbd;"></div>
<div class="b" style="left:868.5px;top:318.8px;width:1px;height:18.2px;background:#bdbdbd;"></div>
<span class="t" style="left:199.90px;top:324.80px;font-family:'Liberation Sans',sans-serif;font-size:8.2px;color:#fff;letter-spacing:-0.181px;">Notes / Activity</span>
<span class="t" style="left:312.00px;top:324.80px;font-family:'Liberation Sans',sans-serif;font-size:8.2px;color:#fff;letter-spacing:-0.176px;">Business / Group</span>
<span class="t" style="left:442.00px;top:324.80px;font-family:'Liberation Sans',sans-serif;font-size:8.2px;color:#fff;letter-spacing:-0.217px;">Marketing</span>
<span class="t" style="left:539.50px;top:324.80px;font-family:'Liberation Sans',sans-serif;font-size:8.2px;color:#fff;letter-spacing:-0.171px;">Bookings / Proposals</span>
<span class="t" style="left:676.80px;top:324.80px;font-family:'Liberation Sans',sans-serif;font-size:8.2px;color:#fff;letter-spacing:-0.214px;">Email Log</span>
<span class="t" style="left:788.60px;top:324.80px;font-family:'Liberation Sans',sans-serif;font-size:8.2px;color:#fff;letter-spacing:-0.176px;">Tasks / Docs</span>
<span class="t" style="left:914.10px;top:324.80px;font-family:'Liberation Sans',sans-serif;font-size:8.2px;color:#fff;letter-spacing:-0.196px;">Reports</span>
<div class="b" style="left:171.5px;top:346.2px;width:808.2px;height:68.8px;background:#f7f7f7;border-radius:3px;"></div>
<h2 class="t" style="left:185.20px;top:357.80px;font-family:'DejaVu Sans','Liberation Sans',sans-serif;font-size:15px;color:#000;font-weight:bold;-webkit-text-stroke:0.2px #000;letter-spacing:-0.279px;">NOTES</h2>
<div class="b" style="left:372.6px;top:359px;width:64.3px;height:15.7px;background:linear-gradient(#f4f4f4,#d2d2d2);border:1px solid #8c8c8c;box-sizing:border-box;border-radius:2.5px;"></div>
<svg style="left:378.9px;top:363.6px" width="6.6" height="6.6" viewBox="0 0 6.6 6.6"><path d="M3.3 0.2 V6.4 M0.2 3.3 H6.4" stroke="#111" stroke-width="1.7"/></svg>
<span class="t" style="left:389.80px;top:363.90px;font-family:'Liberation Sans',sans-serif;font-size:7.2px;color:#111;-webkit-text-stroke:0.1px #111;letter-spacing:-0.062px;">General Note</span>
<div class="b" style="left:446.1px;top:359px;width:48.3px;height:15.7px;background:linear-gradient(#f4f4f4,#d2d2d2);border:1px solid #8c8c8c;box-sizing:border-box;border-radius:2.5px;"></div>
<svg style="left:459px;top:363.6px" width="6.6" height="6.6" viewBox="0 0 6.6 6.6"><path d="M3.3 0.2 V6.4 M0.2 3.3 H6.4" stroke="#111" stroke-width="1.7"/></svg>
<span class="t" style="left:470.20px;top:363.90px;font-family:'Liberation Sans',sans-serif;font-size:7.2px;color:#111;-webkit-text-stroke:0.1px #111;letter-spacing:-0.098px;">Call</span>
<div class="b" style="left:503.8px;top:359px;width:48.8px;height:15.7px;background:linear-gradient(#f4f4f4,#d2d2d2);border:1px solid #8c8c8c;box-sizing:border-box;border-radius:2.5px;"></div>
<svg style="left:514.6px;top:363.6px" width="6.6" height="6.6" viewBox="0 0 6.6 6.6"><path d="M3.3 0.2 V6.4 M0.2 3.3 H6.4" stroke="#111" stroke-width="1.7"/></svg>
<span class="t" style="left:525.00px;top:363.90px;font-family:'Liberation Sans',sans-serif;font-size:7.2px;color:#111;-webkit-text-stroke:0.1px #111;letter-spacing:0.003px;">Email</span>
<div class="b" style="left:562.2px;top:359px;width:48.7px;height:15.7px;background:linear-gradient(#f4f4f4,#d2d2d2);border:1px solid #8c8c8c;box-sizing:border-box;border-radius:2.5px;"></div>
<svg style="left:576.2px;top:363.6px" width="6.6" height="6.6" viewBox="0 0 6.6 6.6"><path d="M3.3 0.2 V6.4 M0.2 3.3 H6.4" stroke="#111" stroke-width="1.7"/></svg>
<span class="t" style="left:587.40px;top:363.90px;font-family:'Liberation Sans',sans-serif;font-size:7.2px;color:#111;-webkit-text-stroke:0.1px #111;transform:scaleX(0.9095);transform-origin:0 0;">Fax</span>
<div class="b" style="left:620px;top:359px;width:48.9px;height:15.7px;background:linear-gradient(#f4f4f4,#d2d2d2);border:1px solid #8c8c8c;box-sizing:border-box;border-radius:2.5px;"></div>
<svg style="left:630.8px;top:363.6px" width="6.6" height="6.6" viewBox="0 0 6.6 6.6"><path d="M3.3 0.2 V6.4 M0.2 3.3 H6.4" stroke="#111" stroke-width="1.7"/></svg>
<span class="t" style="left:641.80px;top:363.90px;font-family:'Liberation Sans',sans-serif;font-size:7.2px;color:#111;-webkit-text-stroke:0.1px #111;letter-spacing:-0.165px;">Letter</span>
<div class="b" style="left:678.1px;top:359px;width:48.7px;height:15.7px;background:linear-gradient(#f4f4f4,#d2d2d2);border:1px solid #8c8c8c;box-sizing:border-box;border-radius:2.5px;"></div>
<svg style="left:685px;top:363.6px" width="6.6" height="6.6" viewBox="0 0 6.6 6.6"><path d="M3.3 0.2 V6.4 M0.2 3.3 H6.4" stroke="#111" stroke-width="1.7"/></svg>
<span class="t" style="left:696.00px;top:363.90px;font-family:'Liberation Sans',sans-serif;font-size:7.2px;color:#111;-webkit-text-stroke:0.1px #111;letter-spacing:-0.154px;">Meeting</span>
<div class="b" style="left:182.7px;top:380.6px;width:543.3px;height:39.4px;background:#fff;border:1px solid #e2e2e2;box-sizing:border-box;border-radius:2px;"></div>
<span class="t" style="left:187.70px;top:386.40px;font-family:'DejaVu Sans','Liberation Sans',sans-serif;font-size:7.8px;color:#9a9a9a;font-style:italic;letter-spacing:-0.183px;">Compose a new note here, then click the applicable button above. The GENERAL button adds a general note to the client record (below), the</span>
<span class="t" style="left:187.70px;top:396.00px;font-family:'DejaVu Sans','Liberation Sans',sans-serif;font-size:7.8px;color:#9a9a9a;font-style:italic;letter-spacing:-0.187px;">specific buttons will add your note below and also add an entry to the activity log to the right.</span>
<h2 class="t" style="left:742.20px;top:357.90px;font-family:'DejaVu Sans','Liberation Sans',sans-serif;font-size:15px;color:#000;font-weight:bold;-webkit-text-stroke:0.2px #000;transform:scaleX(1.0351);transform-origin:0 0;">ACTIVITY LOG</h2>
<div class="b" style="left:740px;top:380.7px;width:229.8px;height:39.3px;background:#f6f6f6;border:1px solid #e2e2e2;box-sizing:border-box;border-radius:1px;"></div>
<div class="b" style="left:740.5px;top:381.2px;width:218.2px;height:15.8px;background:#fff;"></div>
<div class="b" style="left:740.5px;top:397px;width:218.2px;height:15.3px;background:#dde3e3;"></div>
<div class="b" style="left:740.5px;top:412.3px;width:218.2px;height:7.7px;background:#fff;"></div>
<div class="b" style="left:958.7px;top:381.2px;width:10.6px;height:10.8px;background:#fff;"></div>
<svg style="left:961.5px;top:385.4px" width="5" height="3.4" viewBox="0 0 5 3.4"><path d="M0.4 3 L2.5 0.6 L4.6 3" fill="none" stroke="#444" stroke-width="0.9"/></svg>
<span class="t" style="left:748.40px;top:385.50px;font-family:'DejaVu Sans','Liberation Sans',sans-serif;font-size:7.8px;color:#222;letter-spacing:0.246px;">09/01/22</span>
<span class="t" style="left:809.70px;top:385.50px;font-family:'DejaVu Sans','Liberation Sans',sans-serif;font-size:7.8px;color:#222;letter-spacing:-0.067px;">Booking</span>
<span class="t" style="left:748.40px;top:401.20px;font-family:'DejaVu Sans','Liberation Sans',sans-serif;font-size:7.8px;color:#222;letter-spacing:0.246px;">08/11/22</span>
<span class="t" style="left:809.70px;top:401.20px;font-family:'DejaVu Sans','Liberation Sans',sans-serif;font-size:7.8px;color:#222;letter-spacing:0.058px;">Email sent by Lynne Stolk</span>
</body></html>
